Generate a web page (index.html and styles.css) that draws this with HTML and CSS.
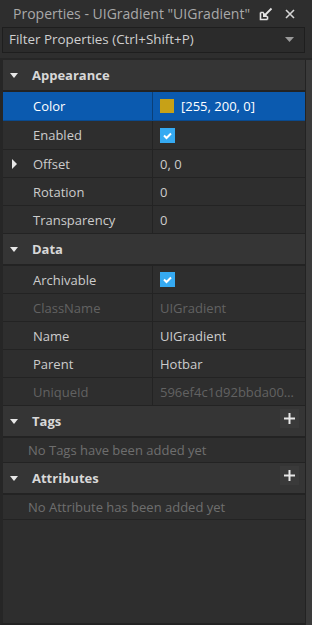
FILE: index.html
```html
<!DOCTYPE html>
<html>
<head>
<meta charset="utf-8">
<link rel="stylesheet" href="styles.css">
</head>
<body>
<div class="window">
  <div class="titlebar">
    <span class="title">Properties - UIGradient "UIGradient"</span>
    <span class="tb-icons">
      <svg width="14" height="14" viewBox="0 0 14 14" class="undock">
        <path d="M1.5 5.5 V12.5 H8.5" fill="none" stroke="#e6e6e6" stroke-width="1.6"/>
        <path d="M1.5 5.5 H4.5 M8.5 12.5 V9.5" fill="none" stroke="#e6e6e6" stroke-width="1.6"/>
        <path d="M12.5 1.5 L6 8" stroke="#e6e6e6" stroke-width="1.8"/>
        <path d="M4 4.8 V10 H9.2 Z" fill="#e6e6e6"/>
      </svg>
      <svg width="12" height="12" viewBox="0 0 12 12" class="close">
        <path d="M2 2 L10 10 M10 2 L2 10" stroke="#d6d6d6" stroke-width="1.6"/>
      </svg>
    </span>
  </div>
  <div class="filter">
    <span class="filter-text">Filter Properties (Ctrl+Shift+P)</span>
    <svg width="9" height="6" viewBox="0 0 9 6" class="dd"><path d="M0 0 H9 L4.5 5 Z" fill="#9a9a9a"/></svg>
  </div>
  <div class="content">
    <div class="panel">
      <div class="header">
        <span class="arrow down"></span><span class="htext">Appearance</span>
      </div>
      <div class="row selected tall">
        <div class="name">Color</div>
        <div class="value"><span class="swatch"></span>[255, 200, 0]</div>
      </div>
      <div class="row tall">
        <div class="name">Enabled</div>
        <div class="value"><span class="check"><svg width="13" height="13" viewBox="0 0 13 13"><path d="M3 6.5 L5.5 9 L10 4.5" fill="none" stroke="#fff" stroke-width="2"/></svg></span></div>
      </div>
      <div class="row">
        <div class="name"><span class="arrow right"></span>Offset</div>
        <div class="value">0, 0</div>
      </div>
      <div class="row">
        <div class="name">Rotation</div>
        <div class="value">0</div>
      </div>
      <div class="row">
        <div class="name">Transparency</div>
        <div class="value">0</div>
      </div>
      <div class="header">
        <span class="arrow down"></span><span class="htext">Data</span>
      </div>
      <div class="row">
        <div class="name">Archivable</div>
        <div class="value"><span class="check"><svg width="13" height="13" viewBox="0 0 13 13"><path d="M3 6.5 L5.5 9 L10 4.5" fill="none" stroke="#fff" stroke-width="2"/></svg></span></div>
      </div>
      <div class="row disabled">
        <div class="name">ClassName</div>
        <div class="value">UIGradient</div>
      </div>
      <div class="row">
        <div class="name">Name</div>
        <div class="value">UIGradient</div>
      </div>
      <div class="row">
        <div class="name">Parent</div>
        <div class="value">Hotbar</div>
      </div>
      <div class="row disabled">
        <div class="name">UniqueId</div>
        <div class="value ellipsis">596ef4c1d92bbda00…</div>
      </div>
      <div class="header">
        <span class="arrow down"></span><span class="htext">Tags</span>
        <span class="plus"><svg width="11" height="11" viewBox="0 0 11 11"><path d="M5.5 0 V11 M0 5.5 H11" stroke="#e8e8e8" stroke-width="2"/></svg></span>
      </div>
      <div class="empty">No Tags have been added yet</div>
      <div class="header">
        <span class="arrow down"></span><span class="htext">Attributes</span>
        <span class="plus"><svg width="11" height="11" viewBox="0 0 11 11"><path d="M5.5 0 V11 M0 5.5 H11" stroke="#e8e8e8" stroke-width="2"/></svg></span>
      </div>
      <div class="empty">No Attribute has been added yet</div>
    </div>
    <div class="scrollbar"></div>
  </div>
</div>
</body>
</html>
```
FILE: styles.css
```css
* { box-sizing: border-box; }
html, body { margin: 0; padding: 0; }
body {
  background: #2e2e2e;
  font-family: "Open Sans", "Noto Sans", sans-serif;
  font-size: 13px;
  color: #cccccc;
}
.window {
  width: 312px;
  height: 625px;
  display: flex;
  flex-direction: column;
  background: #2e2e2e;
}
.titlebar {
  height: 27px;
  display: flex;
  align-items: center;
  padding-left: 13px;
  padding-right: 16px;
  justify-content: space-between;
  background: #2e2e2e;
}
.title {
  color: #a9a9a9;
  font-size: 14px;
  white-space: nowrap;
}
.tb-icons {
  display: flex;
  align-items: center;
  gap: 11px;
}
.filter {
  height: 26px;
  margin: 0 7px 0 2px;
  border: 1px solid #1e1e1e;
  background: #2b2b2b;
  display: flex;
  align-items: center;
  justify-content: space-between;
  padding: 0 10px 2px 6px;
}
.filter-text { color: #cfcfcf; font-size: 13.4px; }
.dd { margin-top: 2px; }
.content {
  flex: 1;
  display: flex;
  margin-top: 5px;
  border-top: 2px solid #262626;
}
.panel {
  flex: 1;
  border-left: 3px solid #262626;
  border-right: 1px solid #232323;
  border-bottom: 2px solid #232323;
  background: #2e2e2e;
}
.scrollbar {
  width: 6px;
  background: #3a3a3a;
}
.header {
  height: 32px;
  display: flex;
  align-items: center;
  background: #353535;
  border-bottom: 2px solid #232323;
  padding-left: 7px;
  padding-right: 6px;
}
.htext {
  font-weight: bold;
  color: #d8d8d8;
  font-size: 13px;
  margin-left: 14px;
}
.arrow { display: inline-block; width: 0; height: 0; }
.arrow.down {
  border-left: 4.5px solid transparent;
  border-right: 4.5px solid transparent;
  border-top: 5px solid #e8e8e8;
}
.arrow.right {
  border-top: 5px solid transparent;
  border-bottom: 5px solid transparent;
  border-left: 5px solid #e8e8e8;
  margin-left: -21px;
  margin-right: 16px;
}
.plus {
  margin-left: auto;
  width: 19px;
  height: 19px;
  background: #3a3a3a;
  display: flex;
  align-items: center;
  justify-content: center;
  margin-top: -6px;
}
.row {
  height: 28px;
  display: flex;
  border-bottom: 1px solid #232323;
  background: #2e2e2e;
}
.row.tall { height: 29px; }
.row .name {
  width: 150px;
  flex: none;
  padding-left: 30px;
  display: flex;
  align-items: center;
  border-right: 1px solid #232323;
  color: #cccccc;
}
.row .value {
  flex: 1;
  min-width: 0;
  display: flex;
  align-items: center;
  padding-left: 7px;
  color: #cccccc;
  white-space: nowrap;
  overflow: hidden;
}
.row.selected { background: #0b5aaf; border-bottom: 1px solid #0a4a8e; }
.row.selected .name { color: #ffffff; border-right-color: #0a3f78; }
.row.selected .value { color: #ffffff; }
.row.disabled .name, .row.disabled .value { color: #626262; }
.swatch {
  width: 14px;
  height: 14px;
  background: #c7a117;
  margin-right: 7px;
}
.check {
  width: 15px;
  height: 15px;
  background: #35aaf2;
  display: flex;
  align-items: center;
  justify-content: center;
}
.empty {
  height: 25px;
  display: flex;
  align-items: center;
  padding-left: 25px;
  color: #6e6e6e;
  border-bottom: 1px solid #232323;
}
```
